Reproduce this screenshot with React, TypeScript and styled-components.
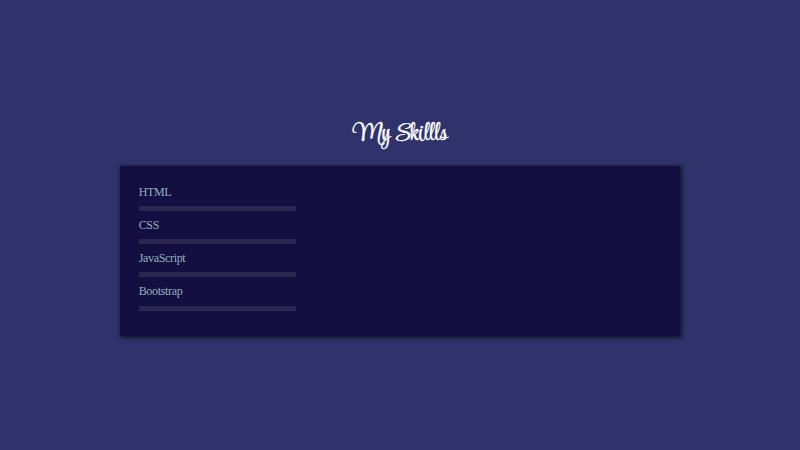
import styled, { createGlobalStyle } from 'styled-components';

const skills = ['HTML', 'CSS', 'JavaScript', 'Bootstrap'];

function App() {
  return (
    <>
      <GlobalStyle />
      <Styled.Root>
        <Styled.Title>My Skillls</Styled.Title>
        <Styled.Card>
          {skills.map((skill) => (
            <Styled.Skill key={skill}>
              <Styled.Name>{skill}</Styled.Name>
              <Styled.Bar />
            </Styled.Skill>
          ))}
        </Styled.Card>
      </Styled.Root>
    </>
  );
}

export default App;

const GlobalStyle = createGlobalStyle`
  * {
    box-sizing: border-box;
    margin: 0;
    padding: 0;
  }

  body {
    background: #30336b;
    font-family: 'Liberation Serif', serif;
  }
`;

const Styled = {
  Root: styled.main`
    display: flex;
    flex-direction: column;
    align-items: center;
    width: 100%;
    height: 100vh;
    padding-top: 117px;
  `,
  Title: styled.h1`
    height: 48.6px;
    color: #fff;
    font-family: 'Style Script', 'Liberation Serif', cursive;
    font-size: 25px;
    font-weight: 400;
    line-height: 34px;
    white-space: nowrap;
    -webkit-text-stroke: 0.3px #fff;
  `,
  Card: styled.section`
    width: 560px;
    height: 170.6px;
    padding: 18.4px 18.7px;
    background: #130f40;
    box-shadow: 1px 1px 4px 1px rgba(0, 0, 0, 0.6);
  `,
  Skill: styled.div`
    width: 157.5px;
    height: 33.1px;
  `,
  Name: styled.p`
    height: 22.3px;
    color: #95afc0;
    font-size: 12px;
    letter-spacing: -0.33px;
    line-height: 16px;
  `,
  Bar: styled.div`
    height: 5px;
    background: #2b2751;
  `,
};
